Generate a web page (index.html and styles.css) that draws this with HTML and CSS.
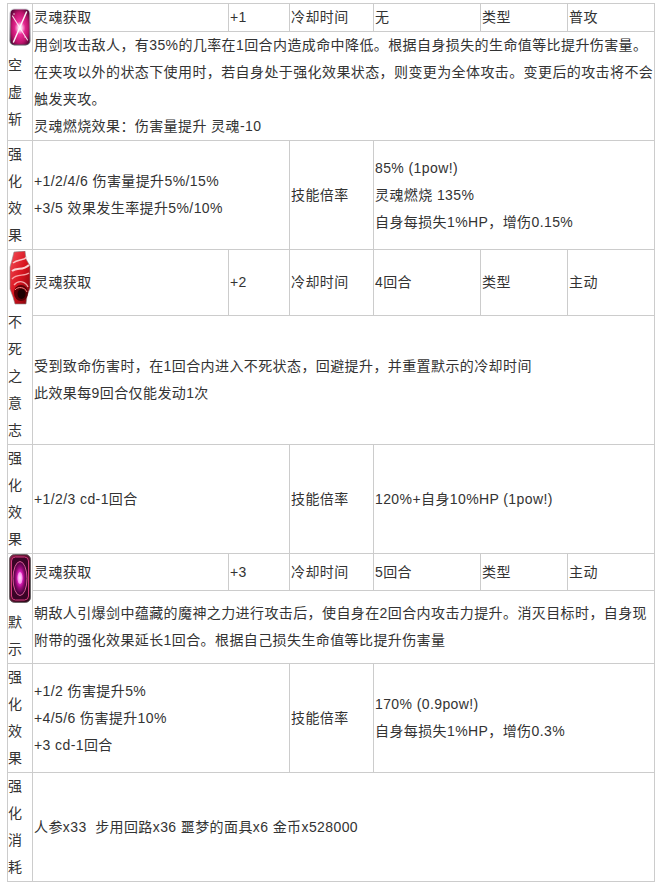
FILE: index.html
```html
<!DOCTYPE html>
<html lang="zh-CN">
<head>
<meta charset="utf-8">
<title>技能</title>
<link rel="stylesheet" href="styles.css">
</head>
<body>
<table class="skills">
  <colgroup>
    <col class="c1"><col class="c2"><col class="c3"><col class="c4"><col class="c5"><col class="c6"><col class="c7">
  </colgroup>
  <tr>
    <td rowspan="2" class="name">
      <svg class="icon icon-1" viewBox="0 0 22 38" width="22" height="38">
        <defs>
          <radialGradient id="gem1" cx="50%" cy="52%" r="62%">
            <stop offset="0" stop-color="#ff9ae0"/>
            <stop offset="0.3" stop-color="#f0309c"/>
            <stop offset="0.7" stop-color="#c0146e"/>
            <stop offset="1" stop-color="#5a0638"/>
          </radialGradient>
          <radialGradient id="glow1" cx="50%" cy="50%" r="50%">
            <stop offset="0" stop-color="#fff" stop-opacity="1"/>
            <stop offset="1" stop-color="#fff" stop-opacity="0"/>
          </radialGradient>
          <linearGradient id="frame1" x1="0" y1="0" x2="0" y2="1">
            <stop offset="0" stop-color="#d8d8de"/>
            <stop offset="1" stop-color="#55555e"/>
          </linearGradient>
        </defs>
        <rect x="0.5" y="0.5" width="21" height="37" rx="5" fill="url(#frame1)"/>
        <rect x="1.6" y="1.6" width="18.8" height="34.8" rx="4" fill="url(#gem1)"/>
        <path d="M17.5 4 L4.5 34" stroke="#fff" stroke-width="1.5" stroke-linecap="round" opacity="0.95"/>
        <path d="M3.5 8 L18.5 32" stroke="#fff" stroke-width="1.1" stroke-linecap="round" opacity="0.85"/>
        <ellipse cx="11" cy="20" rx="5.5" ry="6.5" fill="url(#glow1)"/>
        <circle cx="5" cy="6" r="0.8" fill="#fff" opacity="0.8"/>
        <circle cx="16" cy="29" r="0.7" fill="#fff" opacity="0.7"/>
      </svg>
      空<br>虚<br>斩
    </td>
    <td>灵魂获取</td>
    <td>+1</td>
    <td>冷却时间</td>
    <td>无</td>
    <td>类型</td>
    <td>普攻</td>
  </tr>
  <tr>
    <td colspan="6" class="desc">用剑攻击敌人，有35%的几率在1回合内造成命中降低。根据自身损失的生命值等比提升伤害量。<br>在夹攻以外的状态下使用时，若自身处于强化效果状态，则变更为全体攻击。变更后的攻击将不会<br>触发夹攻。<br>灵魂燃烧效果：伤害量提升 灵魂-10</td>
  </tr>
  <tr>
    <td class="label">强<br>化<br>效<br>果</td>
    <td colspan="2">+1/2/4/6 伤害量提升5%/15%<br>+3/5 效果发生率提升5%/10%</td>
    <td>技能倍率</td>
    <td colspan="3">85% (1pow!)<br>灵魂燃烧 135%<br>自身每损失1%HP，增伤0.15%</td>
  </tr>

  <tr>
    <td rowspan="2" class="name">
      <svg class="icon icon-2" viewBox="0 0 22 54" width="22" height="54">
        <defs>
          <linearGradient id="red2" x1="0" y1="0" x2="1" y2="1">
            <stop offset="0" stop-color="#f5505a"/>
            <stop offset="0.5" stop-color="#d8141f"/>
            <stop offset="1" stop-color="#7a0008"/>
          </linearGradient>
        </defs>
        <path d="M5 1 L16 0 L17 8 L21 15 L21 37 L18 45 L17 53 L6 53 L4 46 L1 38 L1 16 L3 9 Z" fill="url(#red2)" stroke="#8a8a8a" stroke-width="0.6"/>
        <path d="M4 12 C9 8 14 10 18 6" stroke="#ffd6d6" stroke-width="1.6" fill="none" opacity="0.9"/>
        <path d="M3 20 C8 16 14 20 20 14" stroke="#ffe6e6" stroke-width="2" fill="none" opacity="0.9"/>
        <path d="M3 28 C8 22 15 26 20 22" stroke="#ffbcbc" stroke-width="1.4" fill="none" opacity="0.85"/>
        <path d="M5 34 C10 28 17 31 19 36" stroke="#ffcccc" stroke-width="1.3" fill="none" opacity="0.8"/>
        <ellipse cx="12" cy="42" rx="7" ry="8" fill="#5a0006"/>
        <ellipse cx="12.5" cy="43" rx="4" ry="5" fill="#1e0002"/>
        <path d="M6 39 C9 35 16 36 18 41" stroke="#ff8080" stroke-width="1" fill="none"/>
      </svg>
      不<br>死<br>之<br>意<br>志
    </td>
    <td>灵魂获取</td>
    <td>+2</td>
    <td>冷却时间</td>
    <td>4回合</td>
    <td>类型</td>
    <td>主动</td>
  </tr>
  <tr>
    <td colspan="6" class="desc">受到致命伤害时，在1回合内进入不死状态，回避提升，并重置默示的冷却时间<br>此效果每9回合仅能发动1次</td>
  </tr>
  <tr>
    <td class="label">强<br>化<br>效<br>果</td>
    <td colspan="2">+1/2/3 cd-1回合</td>
    <td>技能倍率</td>
    <td colspan="3">120%+自身10%HP (1pow!)</td>
  </tr>

  <tr>
    <td rowspan="2" class="name">
      <svg class="icon icon-3" viewBox="0 0 22 49" width="22" height="49">
        <defs>
          <radialGradient id="core3" cx="50%" cy="48%" r="50%">
            <stop offset="0" stop-color="#ffd0ff"/>
            <stop offset="0.25" stop-color="#ff2ee0"/>
            <stop offset="0.6" stop-color="#9a0a78"/>
            <stop offset="1" stop-color="#3c0030"/>
          </radialGradient>
          <linearGradient id="frame3" x1="0" y1="0" x2="1" y2="1">
            <stop offset="0" stop-color="#8a2048"/>
            <stop offset="1" stop-color="#2a0416"/>
          </linearGradient>
        </defs>
        <rect x="0.5" y="0.5" width="21" height="48" rx="5" fill="url(#frame3)" stroke="#5a5a5a" stroke-width="0.8"/>
        <rect x="2.5" y="3" width="17" height="43" rx="4" fill="#3a0426" stroke="#d43a80" stroke-width="1"/>
        <ellipse cx="11" cy="24.5" rx="7" ry="17" fill="url(#core3)" stroke="#ff6fb0" stroke-width="0.8"/>
        <ellipse cx="11" cy="24" rx="2.5" ry="6" fill="#fff" opacity="0.55"/>
      </svg>
      默<br>示
    </td>
    <td>灵魂获取</td>
    <td>+3</td>
    <td>冷却时间</td>
    <td>5回合</td>
    <td>类型</td>
    <td>主动</td>
  </tr>
  <tr>
    <td colspan="6" class="desc">朝敌人引爆剑中蕴藏的魔神之力进行攻击后，使自身在2回合内攻击力提升。消灭目标时，自身现<br>附带的强化效果延长1回合。根据自己损失生命值等比提升伤害量</td>
  </tr>
  <tr>
    <td class="label">强<br>化<br>效<br>果</td>
    <td colspan="2">+1/2 伤害提升5%<br>+4/5/6 伤害提升10%<br>+3 cd-1回合</td>
    <td>技能倍率</td>
    <td colspan="3">170% (0.9pow!)<br>自身每损失1%HP，增伤0.3%</td>
  </tr>
  <tr>
    <td class="label">强<br>化<br>消<br>耗</td>
    <td colspan="6">人参x33&nbsp; 步用回路x36 噩梦的面具x6 金币x528000</td>
  </tr>
</table>
</body>
</html>
```

FILE: styles.css
```css
body {
  margin: 3px 0 0 7px;
  background: #ffffff;
  font-family: "Liberation Sans", "Noto Sans CJK SC", sans-serif;
  font-size: 14px;
  color: #333333;
}

.skills {
  border-collapse: collapse;
  table-layout: fixed;
  width: 647px;
}

.c1 { width: 25px; }
.c2 { width: 196px; }
.c3 { width: 61px; }
.c4 { width: 84px; }
.c5 { width: 107px; }
.c6 { width: 87px; }
.c7 { width: 87px; }

.skills td {
  border: 1px solid #cccccc;
  padding: 0 0 0 1px;
  line-height: 27px;
  vertical-align: middle;
  white-space: nowrap;
  letter-spacing: 0.4px;
}

.skills td.name {
  vertical-align: top;
  padding-left: 0;
}

.skills td.label {
  padding-left: 0;
}

.icon {
  display: block;
  margin-left: 1px;
}

.icon-1 { margin-top: 4px; margin-bottom: 6px; }
.icon-2 { margin-top: 1px; margin-bottom: 4px; }
.icon-3 { margin-top: 0; margin-bottom: 6px; }
```
